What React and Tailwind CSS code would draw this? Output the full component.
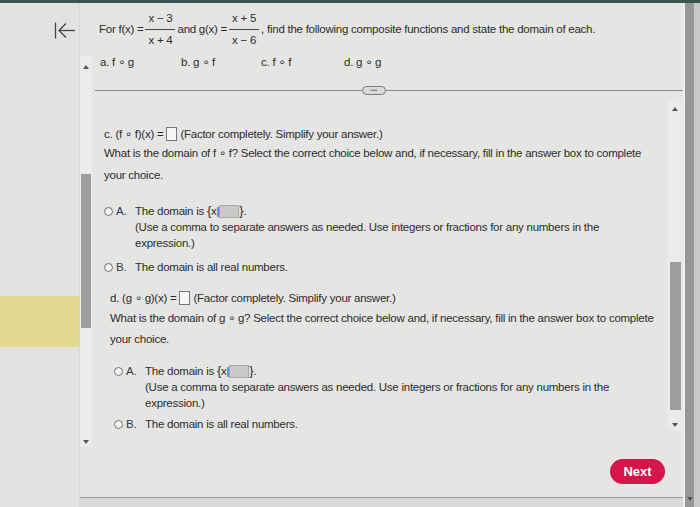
import React from 'react';

const Tri = ({ up }) => (
  <svg width="6" height="4" viewBox="0 0 6 4" className="block">
    <path d={up ? 'M0 4 L3 0 L6 4 Z' : 'M0 0 L3 4 L6 0 Z'} fill="#555" />
  </svg>
);

const Frac = ({ top, bottom }) => (
  <span className="inline-flex flex-col items-center mx-[2px] align-middle">
    <span className="px-[3px] pb-[4px] leading-[13px]">{top}</span>
    <span className="w-full border-t border-[#444]" />
    <span className="px-[3px] pt-[4px] leading-[13px]">{bottom}</span>
  </span>
);

const Box = () => (
  <span className="inline-block align-middle w-[11px] h-[14px] mx-[3px] border border-[#777] bg-[#f6f6f6]" />
);

const Radio = () => (
  <span className="inline-block w-[9px] h-[9px] rounded-full border border-[#6f6f6f] bg-[#f3f3f3] shrink-0" />
);

const Option = ({ letter, children, sub }) => (
  <div>
    <div className="flex items-center leading-[16px]">
      <Radio />
      <span className="ml-[3px] w-[19px] text-[#2f3a4a]">{letter}.</span>
      <span>{children}</span>
    </div>
    {sub && <div className="pl-[31px] leading-[16px] w-[500px]">{sub}</div>}
  </div>
);

const SetAnswer = () => (
  <span className="inline-flex items-center">
    <span>The domain is</span>
    <span className="ml-[3px] text-[13px]">{'{'}</span>
    <span>x|</span>
    <span className="inline-block w-[20px] h-[13px] bg-[#c9c9c9] border border-[#a9a9a9]" />
    <span className="text-[13px]">{'}'}</span>
    <span>.</span>
  </span>
);

const subText =
  '(Use a comma to separate answers as needed. Use integers or fractions for any numbers in the expression.)';

const Section = ({ label, comp, shift, gaps }) => (
  <div className={shift}>
    <div className="leading-[16px] flex items-center">
      <span>
        {label}. ({comp})(x) =
      </span>
      <Box />
      <span>(Factor completely. Simplify your answer.)</span>
    </div>
    <p className={gaps.p}>
      {`What is the domain of ${comp}? Select the correct choice below and, if necessary, fill in the answer box to complete your choice.`}
    </p>
    <div className={gaps.a}>
      <Option letter="A" sub={subText}>
        <SetAnswer />
      </Option>
    </div>
    <div className={gaps.b}>
      <Option letter="B">The domain is all real numbers.</Option>
    </div>
  </div>
);

export default function App() {
  return (
    <div
      className="w-[700px] h-[507px] bg-[#e5e5e4] text-[#2c2c2c] text-[11.5px] tracking-[-0.25px] overflow-hidden flex flex-col"
      style={{ fontFamily: '"Liberation Sans", "DejaVu Sans", Arial, sans-serif' }}
    >
      <div className="h-[3px] bg-[#3d5352] shrink-0" />
      <div className="flex flex-1 min-h-0">
        {/* left strip */}
        <div className="w-[80px] shrink-0 flex flex-col bg-[#e2e2e1] border-r border-[#d6d6d6]">
          <div className="pl-[54px] pt-[19px]">
            <svg width="21" height="17" viewBox="0 0 21 17" fill="none" stroke="#444" strokeWidth="1.3">
              <path d="M1.5 0.5 V16.5" />
              <path d="M5 8.5 H21" />
              <path d="M12 1.5 L5 8.5 L12 15.5" />
            </svg>
          </div>
          <div className="mt-[257px] h-[51px] bg-[#e3d88f]" />
        </div>

        {/* main column */}
        <div className="flex-1 flex flex-col">
          <div className="h-[53px] flex items-center pl-[19px] shrink-0">
            <span>For f(x) =</span>
            <Frac top="x − 3" bottom="x + 4" />
            <span>and g(x) =</span>
            <Frac top="x + 5" bottom="x − 6" />
            <span>, find the following composite functions and state the domain of each.</span>
          </div>

          <div className="flex h-[391px] shrink-0">
            {/* left scrollbar */}
            <div className="w-[12px] shrink-0 bg-[#ebebea] flex flex-col items-center pt-[9px] pb-[3px]">
              <Tri up />
              <div className="mt-[105px] w-[10px] h-[154px] bg-[#9d9d9d]" />
              <div className="mt-auto">
                <Tri />
              </div>
            </div>

            <div className="flex-1 flex flex-col min-w-0">
              <div className="flex pl-[8px] leading-[13px]">
                <span className="w-[81px]">a. f ∘ g</span>
                <span className="w-[80px]">b. g ∘ f</span>
                <span className="w-[83px]">c. f ∘ f</span>
                <span>d. g ∘ g</span>
              </div>

              <div className="mt-[16px] ml-[3px] h-[10px] flex items-center">
                <div className="flex-1 border-t border-[#8a8a8a]" />
                <div className="w-[24px] h-[9px] rounded-full border border-[#7c7c7c] bg-[#dadada] flex items-center justify-center text-[6px] leading-none tracking-normal text-[#666]">
                  •••
                </div>
                <div className="w-[297px] border-t border-[#8a8a8a]" />
              </div>

              <div className="flex flex-1 min-h-0 pt-[5px]">
                <div className="flex-1 pl-[12px] pt-[26px]">
                  <Section
                    label="c"
                    comp="f ∘ f"
                    shift=""
                    gaps={{ p: 'leading-[22px] w-[548px]', a: 'mt-[17px]', b: 'mt-[8px]' }}
                  />
                  <div className="mt-[15px]">
                    <Section
                      label="d"
                      comp="g ∘ g"
                      shift="pl-[6px]"
                      gaps={{ p: 'mt-[2px] leading-[21px] w-[548px]', a: 'mt-[13px] pl-[4px]', b: 'mt-[5px] pl-[4px]' }}
                    />
                  </div>
                </div>

                {/* right scrollbar */}
                <div className="w-[14px] h-[330px] mr-[1px] shrink-0 bg-[#ebebea] flex flex-col items-center pt-[7px] pb-[3px]">
                  <Tri up />
                  <div className="mt-[151px] w-[11px] h-[148px] bg-[#9e9e9e]" />
                  <div className="mt-auto">
                    <Tri />
                  </div>
                </div>
              </div>
            </div>
          </div>

          <div className="flex justify-end pr-[18px] pt-[12px]">
            <button className="w-[55px] h-[25px] rounded-full bg-[#d5164b] text-white font-bold text-[13px] tracking-normal">
              Next
            </button>
          </div>
          <div className="mt-auto h-[10px] border-t border-[#9a9a9a] bg-[#d9d9d9]" />
        </div>

        {/* outer scrollbar */}
        <div className="w-[17px] shrink-0 flex">
          <div className="w-[2px] bg-[#f0f0f0]" />
          <div className="w-[9px] bg-[#979797] flex flex-col items-center justify-end pb-[6px]">
            <Tri />
          </div>
          <div className="flex-1 bg-[#c9c9c9]" />
        </div>
      </div>
    </div>
  );
}
